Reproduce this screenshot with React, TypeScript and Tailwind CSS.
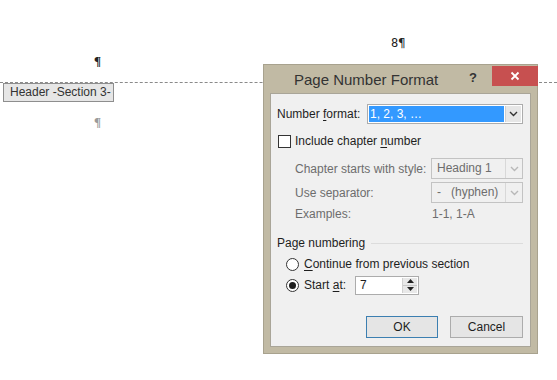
import React from "react";

const Chevron = ({ color }: { color: string }) => (
  <svg width="9" height="6" viewBox="0 0 9 6">
    <path d="M1 1 L4.5 4.5 L8 1" fill="none" stroke={color} strokeWidth="1.4" />
  </svg>
);

const U = ({ children }: { children: React.ReactNode }) => <span className="underline underline-offset-2">{children}</span>;

export default function App() {
  return (
    <div className="relative w-[557px] h-[380px] bg-white overflow-hidden whitespace-nowrap" style={{ fontFamily: '"Liberation Sans", Arial, sans-serif' }}>
      {/* document */}
      <div className="pt-[36px] pl-[391px] h-[52px] leading-[14px] text-[12px] text-[#222]" style={{ fontFamily: '"DejaVu Sans Mono", monospace' }}>8¶</div>
      <div className="pl-[94px] h-[18px] leading-[18px] text-[13px] font-bold text-[#222]" style={{ fontFamily: '"Liberation Serif", serif' }}>¶</div>
      <div className="mt-[12px] h-0 border-t border-dashed border-[#8a8a8a] w-full" />
      <div className="ml-[3px] w-[111px] h-[19px] bg-[#e6e6e6] border border-[#8e8e8e] text-[12px] leading-[17px] text-[#333] pl-[6px]">Header -Section 3-</div>
      <div className="pl-[94px] mt-[12px] h-[16px] leading-[16px] text-[13px] font-bold text-[#9a9a9a]" style={{ fontFamily: '"Liberation Serif", serif' }}>¶</div>

      {/* dialog */}
      <div className="absolute left-[263px] top-[64px] w-[275px] h-[290px] bg-[#c1baa4] border border-[#a8a28e] flex flex-col px-[6px] pb-[6px]">
        <div className="h-[28px] relative flex items-center">
          <div className="flex-1 text-[15px] text-[#333] pl-[24px] leading-[20px] pt-[1px]">Page Number Format</div>
          <div className="absolute left-[199px] top-[3px] text-[13px] font-bold text-[#333]">?</div>
          <div className="absolute left-[222px] top-[1px] w-[46px] h-[20px] bg-[#c75050] flex items-center justify-center">
            <svg width="10" height="10" viewBox="0 0 10 10">
              <path d="M1.5 1.5 L8.5 8.5 M8.5 1.5 L1.5 8.5" stroke="#fff" strokeWidth="1.8" />
            </svg>
          </div>
        </div>
        <div className="flex-1 bg-[#f0f0f0] border border-[#a9a598] flex flex-col pl-[6px] pr-[7px] text-[12px] text-[#1e1e1e]">
          {/* number format */}
          <div className="mt-[10px] h-[20px] flex items-center justify-between">
            <span>Number <U>f</U>ormat:</span>
            <div className="w-[156px] h-[20px] bg-white border border-[#acacac] flex items-stretch p-[1px]">
              <div className="flex-1 bg-[#3399ff] text-white leading-[16px] pl-[1px]">1, 2, 3, …</div>
              <div className="w-[16px] bg-[#e6e6e6] border-l border-[#cfcfcf] flex items-center justify-center ml-[1px]">
                <Chevron color="#333" />
              </div>
            </div>
          </div>
          {/* checkbox */}
          <div className="mt-[7px] h-[20px] flex items-center">
            <div className="w-[13px] h-[13px] bg-white border border-[#333] ml-[1px]" />
            <span className="ml-[4px]">Include chapter <U>n</U>umber</span>
          </div>
          {/* chapter starts */}
          <div className="mt-[7px] h-[21px] flex items-center justify-between text-[#6d6d6d]">
            <span className="pl-[18px]">Chapter starts with style:</span>
            <div className="w-[92px] h-[21px] bg-[#f0f0f0] border border-[#c3c3c3] flex items-stretch">
              <div className="flex-1 leading-[19px] pl-[5px]">Heading 1</div>
              <div className="w-[17px] border-l border-[#d8d8d8] flex items-center justify-center">
                <Chevron color="#b8b8b8" />
              </div>
            </div>
          </div>
          {/* separator */}
          <div className="mt-[3px] h-[21px] flex items-center justify-between text-[#6d6d6d]">
            <span className="pl-[18px]">Use separator:</span>
            <div className="w-[92px] h-[21px] bg-[#f0f0f0] border border-[#c3c3c3] flex items-stretch">
              <div className="flex-1 leading-[19px] pl-[5px] whitespace-pre">-   (hyphen)</div>
              <div className="w-[17px] border-l border-[#d8d8d8] flex items-center justify-center">
                <Chevron color="#b8b8b8" />
              </div>
            </div>
          </div>
          {/* examples */}
          <div className="mt-[2px] h-[18px] flex items-center text-[#6d6d6d]">
            <span className="pl-[18px] w-[155px]">Examples:</span>
            <span>1-1, 1-A</span>
          </div>
          {/* page numbering */}
          <div className="mt-[11px] h-[18px] flex items-center">
            <span>Page numbering</span>
            <div className="flex-1 ml-[6px] border-t border-[#dcdcdc]" />
          </div>
          {/* continue */}
          <div className="mt-[3px] h-[18px] flex items-center pl-[9px]">
            <div className="w-[13px] h-[13px] rounded-full bg-white border border-[#333]" />
            <span className="ml-[5px]"><U>C</U>ontinue from previous section</span>
          </div>
          {/* start at */}
          <div className="mt-[3px] h-[18px] flex items-center pl-[9px]">
            <div className="w-[13px] h-[13px] rounded-full bg-white border border-[#333] flex items-center justify-center">
              <div className="w-[7px] h-[7px] rounded-full bg-[#1e1e1e]" />
            </div>
            <span className="ml-[5px] w-[51px]">Start <U>a</U>t:</span>
            <div className="w-[64px] h-[19px] bg-white border border-[#acacac] flex items-stretch">
              <div className="flex-1 leading-[17px] pl-[4px]">7</div>
              <div className="w-[15px] flex flex-col border-l border-[#d0d0d0] m-[1px] ml-0">
                <div className="flex-1 bg-[#e8e8e8] border-b border-[#c8c8c8] flex items-center justify-center">
                  <svg width="7" height="4" viewBox="0 0 7 4"><path d="M0 4 L3.5 0 L7 4Z" fill="#222" /></svg>
                </div>
                <div className="flex-1 bg-[#e8e8e8] flex items-center justify-center">
                  <svg width="7" height="4" viewBox="0 0 7 4"><path d="M0 0 L3.5 4 L7 0Z" fill="#222" /></svg>
                </div>
              </div>
            </div>
          </div>
          {/* buttons */}
          <div className="mt-[22px] flex justify-end gap-[12px]">
            <div className="w-[72px] h-[22px] bg-[#e5e5e5] border border-[#3c7fb1] flex items-center justify-center">OK</div>
            <div className="w-[73px] h-[22px] bg-[#e5e5e5] border border-[#acacac] flex items-center justify-center">Cancel</div>
          </div>
        </div>
      </div>
    </div>
  );
}
